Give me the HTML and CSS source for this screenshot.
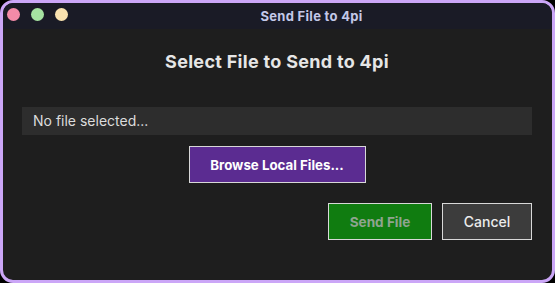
FILE: index.html
```html
<!DOCTYPE html>
<html lang="en">
<head>
    <meta charset="UTF-8">
    <meta name="viewport" content="width=device-width, initial-scale=1.0">
    <title>Send File to 4pi</title>
    <link rel="stylesheet" href="styles.css">
</head>
<body>
    <div class="window">
        <div class="titlebar">
            <div class="lights">
                <span class="light close"></span>
                <span class="light min"></span>
                <span class="light max"></span>
            </div>
            <div class="title">Send File to 4pi</div>
        </div>
        <div class="content">
            <div class="page-heading">Select File to Send to 4pi</div>
            <div class="file-field">No file selected...</div>
            <div class="browse-row">
                <button type="button" class="btn browse">Browse Local Files...</button>
            </div>
            <div class="actions">
                <button type="button" class="btn send" disabled>Send File</button>
                <button type="button" class="btn cancel">Cancel</button>
            </div>
        </div>
    </div>
</body>
</html>
```

FILE: styles.css
```css
body {
    margin: 0;
    padding: 0;
    background-color: #000;
    font-family: Inter, "Noto Sans", sans-serif;
}

.window {
    box-sizing: border-box;
    width: 555px;
    height: 283px;
    border: 3px solid #cba6f7;
    border-radius: 13px;
    background-color: #1e1e1e;
    overflow: hidden;
    display: flex;
    flex-direction: column;
}

.titlebar {
    position: relative;
    height: 26px;
    background-color: #1a1b26;
    display: flex;
    align-items: center;
    justify-content: center;
}

.lights {
    position: absolute;
    left: 4px;
    top: 5px;
    display: flex;
    gap: 11px;
}

.light {
    width: 13px;
    height: 13px;
    border-radius: 50%;
}

.close { background-color: #f38ba8; }
.min { background-color: #a6e3a1; }
.max { background-color: #f9e2af; }

.title {
    color: #c3c8e8;
    font-size: 13px;
    font-weight: 700;
    padding-left: 68px;
    letter-spacing: 0.3px;
}

.content {
    flex: 1;
    padding: 0 20px 0 19px;
}

.page-heading {
    text-align: center;
    color: #e6e6e6;
    font-size: 18px;
    font-weight: 700;
    letter-spacing: 0.3px;
    margin-top: 22px;
    height: 23px;
}

.file-field {
    margin-top: 33px;
    height: 28px;
    line-height: 28px;
    background-color: #2d2d2d;
    color: #dcdcdc;
    font-size: 14px;
    padding-left: 11px;
}

.browse-row {
    display: flex;
    justify-content: center;
    margin-top: 11px;
}

.btn {
    box-sizing: border-box;
    height: 37px;
    border: 1px solid #d8d8d8;
    font-family: Inter, "Noto Sans", sans-serif;
    font-size: 13.3px;
    padding: 0;
}

.browse {
    width: 177px;
    background-color: #5b2c91;
    color: #fff;
    font-weight: 700;
}

.actions {
    display: flex;
    justify-content: flex-end;
    gap: 10px;
    margin-top: 20px;
}

.send {
    width: 104px;
    background-color: #107c10;
    color: #8fa48f;
    font-weight: 700;
    font-size: 13.6px;
}

.cancel {
    width: 90px;
    background-color: #3c3c3c;
    color: #ececec;
    font-weight: 500;
    font-size: 14px;
}
```
